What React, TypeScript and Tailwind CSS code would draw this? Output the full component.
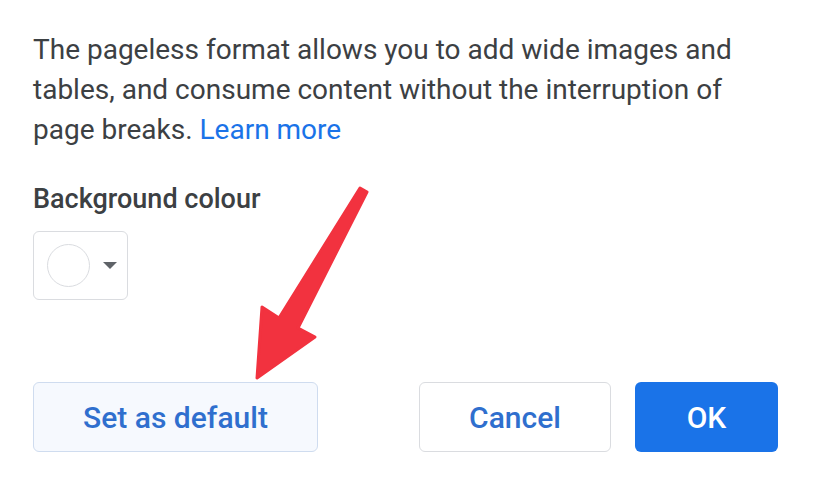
import React from "react";

export default function App() {
  return (
    <div
      className="relative w-[825px] h-[496px] bg-white overflow-hidden"
      style={{ fontFamily: "Roboto, 'Liberation Sans', sans-serif" }}
    >
      <div className="px-[33px] pt-[30px]">
        <p className="text-[28px] leading-[40px] text-[#3c4043] w-[745px]">
          The pageless format allows you to add wide images and tables, and consume content without the interruption of page breaks.{" "}
          <span className="text-[#1a73e8]">Learn more</span>
        </p>
        <div className="mt-[34px] text-[27px] leading-[30px] font-medium text-[#3c4043]">Background colour</div>
        <div className="mt-[17px] w-[95px] h-[69px] rounded-[6px] border border-[#dadce0] flex items-center pl-[13px] gap-[13px]">
          <div className="w-[43px] h-[43px] rounded-full border-[1.5px] border-[#dadce0]" />
          <svg width="14" height="8" viewBox="0 0 14 8">
            <path d="M0 0 L14 0 L7 7 Z" fill="#5f6368" />
          </svg>
        </div>
        <div className="mt-[82px] flex items-center">
          <button className="w-[285px] h-[70px] rounded-[6px] border border-[#cfdcef] bg-[#f6f9fe] text-[#2f6fce] text-[30px] font-medium">
            Set as default
          </button>
          <button className="ml-[101px] w-[192px] h-[70px] rounded-[6px] border border-[#dadce0] bg-white text-[#2f6fce] text-[30px] font-medium">
            Cancel
          </button>
          <button className="ml-[24px] w-[143px] h-[70px] rounded-[6px] bg-[#1a73e8] text-white text-[30px] font-medium">
            OK
          </button>
        </div>
      </div>
      <svg className="absolute inset-0 pointer-events-none" width="825" height="496" viewBox="0 0 825 496">
        <polygon
          points="360,188 279,318 262,307 257,378 315,337 298,328 367,192"
          fill="#f2323f"
          stroke="#f2323f"
          strokeWidth="3"
          strokeLinejoin="round"
        />
      </svg>
    </div>
  );
}
